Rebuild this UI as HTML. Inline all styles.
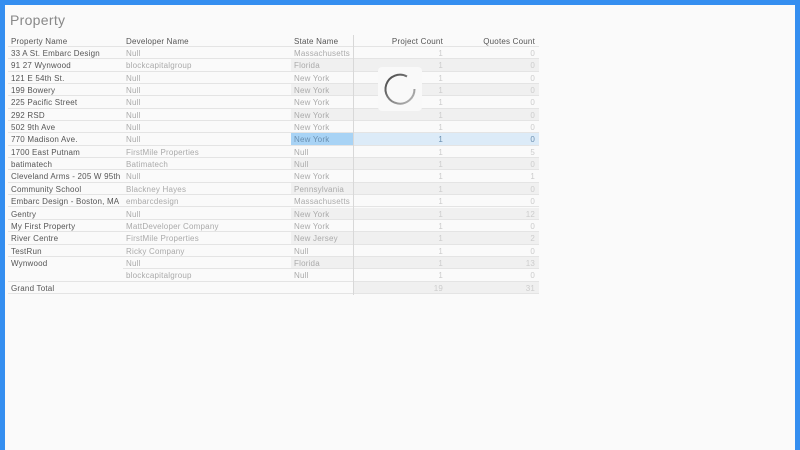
<!DOCTYPE html>
<html><head><meta charset="utf-8"><style>
*{margin:0;padding:0;box-sizing:border-box}
body{width:800px;height:450px;overflow:hidden;background:#fafafa;font-family:"Liberation Sans",sans-serif;position:relative}
.bt{position:absolute;left:0;top:0;width:800px;height:5px;background:#348ef0}
.bl{position:absolute;left:0;top:0;width:5px;height:450px;background:#348ef0}
.br{position:absolute;right:0;top:0;width:5px;height:450px;background:#348ef0}
.title{position:absolute;left:10px;top:12px;font-size:14px;color:#888;letter-spacing:0.3px}
.c{position:absolute;height:12.35px;line-height:13.5px;font-size:8px;letter-spacing:0.2px;white-space:nowrap;overflow:hidden;border-bottom:1px solid #e4e4e4}
.h{color:#555;font-size:8px}
.p{color:#555}
.g{color:#aaa}
.n{color:#ccc;text-align:right;padding-right:4px}
.s{background:#f0f0f0}
.hl{background:#a8d3f5;color:#6a8fb0}
.hl2{background:#dcebf8;color:#6a8fb0}
.vl{position:absolute;left:353px;top:35px;width:1px;height:260px;background:#d8d8d8}
</style></head><body>
<div class="bt"></div><div class="bl"></div><div class="br"></div>
<div class="title">Property</div>
<div id="t"></div>
<div class="vl"></div>
<div style="position:absolute;left:378px;top:67px;width:44px;height:44px;background:#f9f9f9;border-radius:4px"></div>
<svg style="position:absolute;left:380px;top:69px" width="40" height="40" viewBox="0 0 40 40">
<defs><linearGradient id="gr" x1="0" y1="0" x2="1" y2="1"><stop offset="0" stop-color="#444"/><stop offset="1" stop-color="#bbb"/></linearGradient></defs>
<path d="M27 7.5 A14.5 14.5 0 1 0 34.5 20" fill="none" stroke="url(#gr)" stroke-width="2"/>
</svg>
<script>
var d=[["33 A St. Embarc Design","Null","Massachusetts",1,0],["91 27 Wynwood","blockcapitalgroup","Florida",1,0],["121 E 54th St.","Null","New York",1,0],["199 Bowery","Null","New York",1,0],["225 Pacific Street","Null","New York",1,0],["292 RSD","Null","New York",1,0],["502 9th Ave","Null","New York",1,0],["770 Madison Ave.","Null","New York",1,0],["1700 East Putnam","FirstMile Properties","Null",1,5],["batimatech","Batimatech","Null",1,0],["Cleveland Arms - 205 W 95th S..","Null","New York",1,1],["Community School","Blackney Hayes","Pennsylvania",1,0],["Embarc Design - Boston, MA","embarcdesign","Massachusetts",1,0],["Gentry","Null","New York",1,12],["My First Property","MattDeveloper Company","New York",1,0],["River Centre","FirstMile Properties","New Jersey",1,2],["TestRun","Ricky Company","Null",1,0],["Wynwood","Null","Florida",1,13],["","blockcapitalgroup","Null",1,0]];
var h='',R=12.35,T=34.6;
function c(x,w,y,cls,txt,ex){return '<div class="c '+cls+'" style="left:'+x+'px;width:'+w+'px;top:'+y+'px;padding-left:'+(ex||3)+'px;'+'">'+txt+'</div>';}
h+=c(8,115,T,'h','Property Name')+c(123,168,T,'h','Developer Name')+c(291,62,T,'h','State Name');
h+='<div class="c h" style="left:353px;width:94px;top:'+T+'px;text-align:right;padding-right:4px">Project Count</div>';
h+='<div class="c h" style="left:447px;width:92px;top:'+T+'px;text-align:right;padding-right:4px">Quotes Count</div>';
for(var i=0;i<d.length;i++){var y=T+R*(i+1),r=d[i],sh=(i%2==1)?' s':'',hl=i==7;
var pb=(i==17)?'border-bottom:none;':'';
h+='<div class="c p" style="left:8px;width:115px;top:'+y+'px;padding-left:3px;'+pb+'">'+r[0]+'</div>';
h+=c(123,168,y,'g',r[1]);
h+=c(291,62,y,hl?'hl':'g'+sh,r[2]);
h+='<div class="c n'+(hl?' hl2':sh)+'" style="left:353px;width:94px;top:'+y+'px">'+r[3]+'</div>';
h+='<div class="c n'+(hl?' hl2':sh)+'" style="left:447px;width:92px;top:'+y+'px">'+r[4]+'</div>';}
var y=T+R*20;
h+=c(8,345,y,'p','Grand Total');
h+='<div class="c n s" style="left:353px;width:94px;top:'+y+'px">19</div><div class="c n s" style="left:447px;width:92px;top:'+y+'px">31</div>';
document.getElementById('t').innerHTML=h;
</script>
</body></html>
